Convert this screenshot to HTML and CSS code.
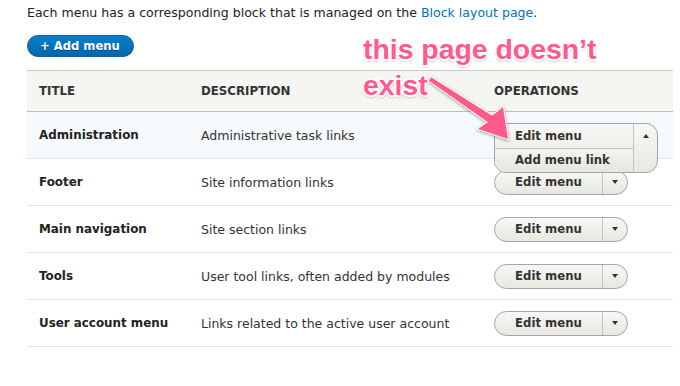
FILE: index.html
```html
<!DOCTYPE html>
<html lang="en">
<head>
<meta charset="utf-8">
<title>Menus</title>
<link rel="stylesheet" href="styles.css">
</head>
<body>
<main class="page">
  <p class="intro">Each menu has a corresponding block that is managed on the <a class="link" href="#">Block layout page</a>.</p>
  <a class="btn-primary" href="#">+ Add menu</a>
  <table class="menus">
    <thead>
      <tr>
        <th class="col-title">Title</th>
        <th class="col-desc">Description</th>
        <th class="col-ops">Operations</th>
      </tr>
    </thead>
    <tbody>
      <tr class="active">
        <td class="title">Administration</td>
        <td class="desc">Administrative task links</td>
        <td class="ops">
          <div class="db-wrap">
            <div class="dropbutton open">
              <a class="db-item first" href="#">Edit menu</a>
              <a class="db-item second" href="#">Add menu link</a>
              <span class="db-toggle"><span class="caret up"></span></span>
            </div>
          </div>
        </td>
      </tr>
      <tr>
        <td class="title">Footer</td>
        <td class="desc">Site information links</td>
        <td class="ops"><div class="db-wrap"><div class="dropbutton"><a class="db-main" href="#">Edit menu</a><span class="db-toggle"><span class="caret"></span></span></div></div></td>
      </tr>
      <tr>
        <td class="title">Main navigation</td>
        <td class="desc">Site section links</td>
        <td class="ops"><div class="db-wrap"><div class="dropbutton"><a class="db-main" href="#">Edit menu</a><span class="db-toggle"><span class="caret"></span></span></div></div></td>
      </tr>
      <tr>
        <td class="title">Tools</td>
        <td class="desc">User tool links, often added by modules</td>
        <td class="ops"><div class="db-wrap"><div class="dropbutton"><a class="db-main" href="#">Edit menu</a><span class="db-toggle"><span class="caret"></span></span></div></div></td>
      </tr>
      <tr>
        <td class="title">User account menu</td>
        <td class="desc">Links related to the active user account</td>
        <td class="ops"><div class="db-wrap"><div class="dropbutton"><a class="db-main" href="#">Edit menu</a><span class="db-toggle"><span class="caret"></span></span></div></div></td>
      </tr>
    </tbody>
  </table>

  <div class="note">this page doesn’t<br>exist</div>
  <svg class="arrow" width="680" height="386" viewBox="0 0 680 386" aria-hidden="true">
    <path d="M428.9,80.7 L431.1,77.3 L492.2,115.7 L503,107 L508,139 L478,129 L487.8,122.3 Z" fill="#ff5a8c" stroke="#ffffff" stroke-width="2" stroke-linejoin="round" paint-order="stroke"/>
  </svg>
</main>
</body>
</html>
```

FILE: styles.css
```css
html, body {
  margin: 0;
  padding: 0;
  background: #ffffff;
}

.page {
  position: relative;
  width: 680px;
  height: 386px;
  box-sizing: border-box;
  padding: 4px 7px 0 27px;
  font-family: "DejaVu Sans", Verdana, sans-serif;
  color: #222222;
  overflow: hidden;
}

.intro {
  margin: 0;
  font-size: 12.55px;
  line-height: 18px;
  color: #222222;
}

.link {
  color: #0074bd;
  text-decoration: none;
}

.btn-primary {
  display: inline-block;
  margin-top: 13px;
  height: 22px;
  box-sizing: border-box;
  padding: 0 13px 0 12px;
  border: 1px solid #1e5c90;
  border-radius: 11px;
  background-color: #0071b8;
  background-image: linear-gradient(to bottom, #0a7fcb, #0068ad);
  color: #ffffff;
  font-weight: bold;
  font-size: 11.6px;
  line-height: 20px;
  text-decoration: none;
  text-shadow: 0 1px 0 rgba(0, 0, 0, 0.35);
}

.menus {
  display: table;
  margin-top: 13px;
  width: 646px;
  border-collapse: separate;
  border-spacing: 0;
  table-layout: fixed;
}

.menus th {
  height: 40px;
  padding: 0 12px;
  background: #f5f5f2;
  border-top: 1px solid #c9c9c4;
  border-bottom: 1px solid #bfbfba;
  text-align: left;
  text-transform: uppercase;
  font-size: 11.8px;
  font-weight: bold;
  color: #333333;
  vertical-align: middle;
}

.col-title { width: 138px; }
.col-desc { width: 269px; }
.col-ops { width: auto; }

.menus td {
  height: 46px;
  padding: 0 12px;
  border-bottom: 1px solid #e6e4df;
  vertical-align: middle;
  font-size: 12.5px;
  color: #333333;
}

.menus tr.active td {
  background: #f6fafd;
}

.menus td.title {
  font-weight: bold;
  font-size: 11.9px;
  color: #222222;
}

.db-wrap {
  position: relative;
  height: 25px;
}

.dropbutton {
  display: flex;
  width: 134px;
  height: 25px;
  box-sizing: border-box;
  border: 1px solid #a6a6a6;
  border-radius: 13px;
  background-color: #f2f1eb;
  background-image: linear-gradient(to bottom, #f7f7f4, #e8e8e2);
  overflow: hidden;
}

.db-main {
  width: 107px;
  flex: none;
  text-align: center;
  line-height: 23px;
  font-weight: bold;
  font-size: 11.7px;
  color: #333333;
  text-decoration: none;
}

.db-toggle {
  flex: 1;
  display: flex;
  justify-content: center;
  align-items: center;
  border-left: 1px solid #c4c4bf;
}

.caret {
  width: 0;
  height: 0;
  border-left: 3.5px solid transparent;
  border-right: 3.5px solid transparent;
  border-top: 4px solid #333333;
}

.caret.up {
  border-top: 0;
  border-bottom: 4px solid #333333;
}

.dropbutton.open {
  position: absolute;
  top: 0;
  left: 0;
  z-index: 2;
  width: 164px;
  height: 50px;
  display: grid;
  grid-template-columns: 138px 1fr;
  grid-template-rows: 25px 1fr;
  border-radius: 12px;
  background-image: linear-gradient(to bottom, #f7f7f4, #e8e8e2);
}

.dropbutton.open .db-item {
  grid-column: 1;
  padding-left: 20px;
  font-weight: bold;
  font-size: 11.7px;
  color: #333333;
  text-decoration: none;
  line-height: 24px;
}

.dropbutton.open .db-item.first {
  grid-row: 1;
  border-bottom: 1px solid #c4c4bf;
}

.dropbutton.open .db-item.second {
  grid-row: 2;
  background: linear-gradient(to bottom, #f3f3ef, #e6e6e0);
  line-height: 23px;
}

.dropbutton.open .db-toggle {
  grid-column: 2;
  grid-row: 1 / span 2;
  align-items: flex-start;
  padding-top: 10px;
}

.note {
  position: absolute;
  left: 363px;
  top: 31px;
  z-index: 3;
  font-family: "Liberation Sans", Arial, sans-serif;
  font-weight: bold;
  font-size: 28.4px;
  line-height: 36px;
  color: #ff5a8c;
  text-shadow:
    1.5px 0 0 #fff, -1.5px 0 0 #fff, 0 1.5px 0 #fff, 0 -1.5px 0 #fff,
    1px 1px 0 #fff, -1px -1px 0 #fff, 1px -1px 0 #fff, -1px 1px 0 #fff,
    0 2px 3px rgba(0, 0, 0, 0.35);
}

.arrow {
  position: absolute;
  left: 0;
  top: 0;
  z-index: 3;
  pointer-events: none;
  filter: drop-shadow(0 1px 1.5px rgba(0, 0, 0, 0.35));
}
```
